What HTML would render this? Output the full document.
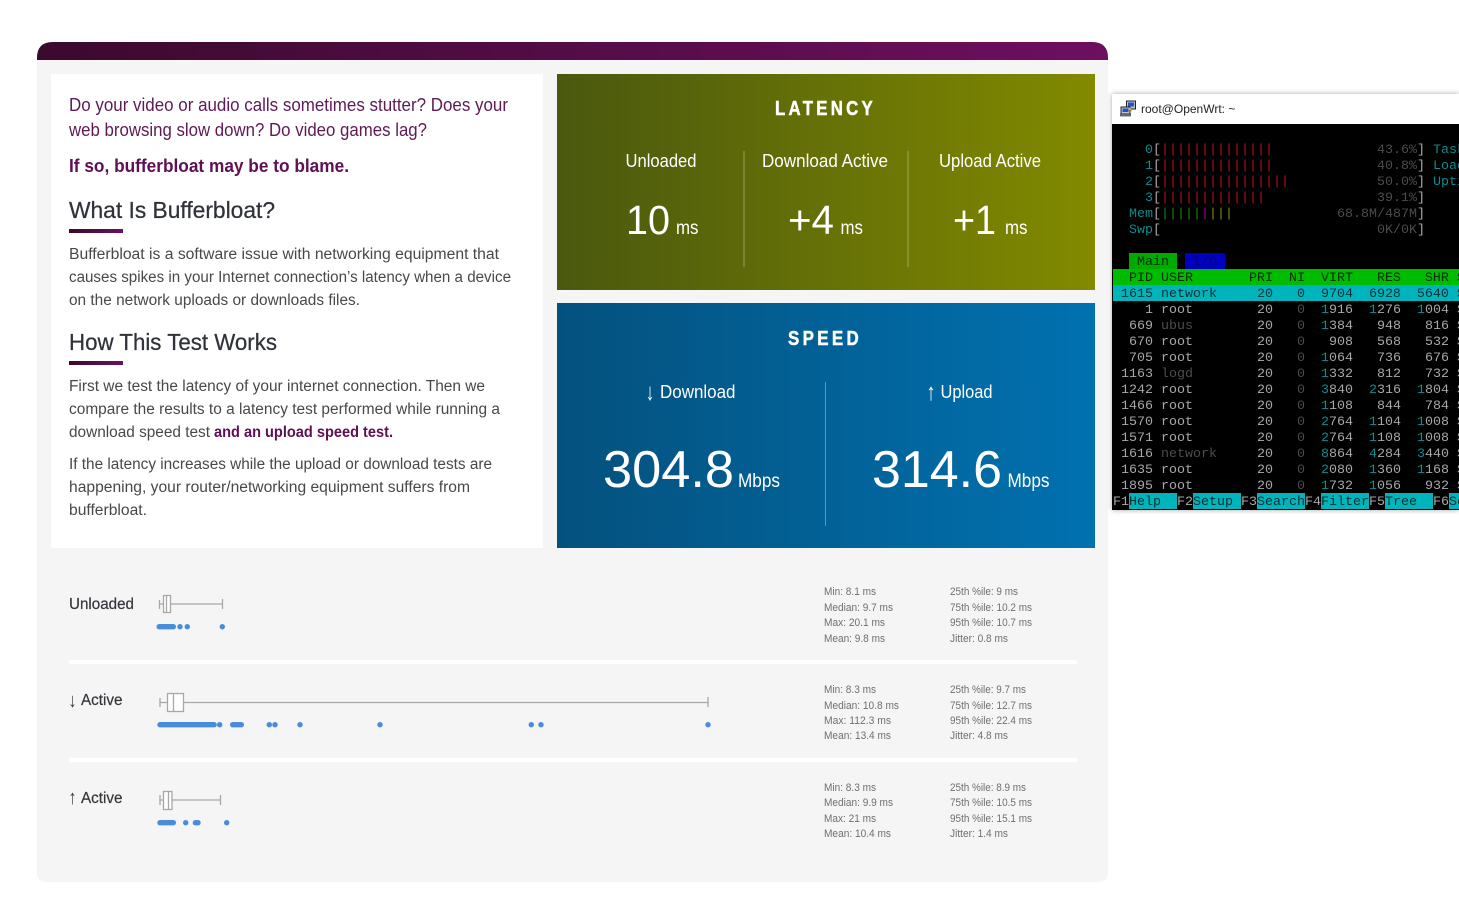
<!DOCTYPE html>
<html><head><meta charset="utf-8"><title>Bufferbloat Test</title>
<style>
html,body{margin:0;padding:0;background:#fff;width:1459px;height:899px;overflow:hidden}
svg.m{position:absolute;left:0;top:0}
svg text{font-family:"Liberation Sans",sans-serif}
.s{font-size:10.6px;fill:#6f6f6f}
.p{font-size:15.5px;fill:#484848}
.h{font-size:23px;fill:#2f3238;stroke:#2f3238;stroke-width:.25px}
.i{font-size:18px;fill:#5f1a55}
.b{font-weight:bold;fill:#5f0f54}
.w{fill:#fff}
.ti{letter-spacing:4px;font-weight:bold;font-size:20.5px;stroke:#fff;stroke-width:.5px}
.l{font-size:15.5px;fill:#33363b;stroke:#33363b;stroke-width:.2px}
.a{font-size:20px;fill:#33363b}
#win{position:absolute;left:1112px;top:94px;width:347px;height:416px;background:#000;box-shadow:0 0 5px rgba(0,0,0,.35);overflow:hidden}
#tb{position:absolute;left:0;top:0;width:347px;height:30px;background:#fff}
#tt{position:absolute;left:29px;top:7px;font:12px/16px "Liberation Sans",sans-serif;color:#222;white-space:nowrap}
#term{position:absolute;left:1px;top:47px;width:346px;font:13.334px/20px "Liberation Mono",monospace;color:#a8a8a8;filter:blur(.25px)}
#term div{height:16px;width:346px;overflow:hidden;white-space:pre}
.t{color:#0c8c8c}.d{color:#4c4c4c}.r{color:#b01515}.g{color:#0a8a0a}.v{color:#a000a0}.y{color:#8a8a00}
.hd{background:#00bb00;color:#062a06}
.hl{background:#00b4bb;color:#063034}
.f{background:#00b4bb;color:#063034;padding:3px 0}
.mt{background:#00aa00;color:#043004;padding:3px 0}
.io{background:#0000c0;color:#000078;padding:3px 0}
</style></head><body>
<svg class="m" width="1459" height="899" viewBox="0 0 1459 899">
<defs>
<linearGradient id="pu"><stop offset="0" stop-color="#3b0a2d"/><stop offset="1" stop-color="#6e0f60"/></linearGradient>
<linearGradient id="ol"><stop offset="0" stop-color="#4a580e"/><stop offset="1" stop-color="#828a00"/></linearGradient>
<linearGradient id="bl"><stop offset="0" stop-color="#04517e"/><stop offset="1" stop-color="#0171b0"/></linearGradient>
</defs>
<path d="M37 50H1108V872Q1108 882 1098 882H47Q37 882 37 872Z" fill="#f5f5f5"/>
<path d="M37 60V58Q37 42 53 42H1092Q1108 42 1108 58V60Z" fill="url(#pu)"/>
<rect x="51" y="74" width="492" height="474" fill="#fff"/>
<rect x="557" y="74" width="538" height="216" fill="url(#ol)"/>
<rect x="557" y="303" width="538" height="245" fill="url(#bl)"/>

<text class="i" x="69" y="111" textLength="439" lengthAdjust="spacingAndGlyphs">Do your video or audio calls sometimes stutter? Does your</text>
<text class="i" x="69" y="136" textLength="358" lengthAdjust="spacingAndGlyphs">web browsing slow down? Do video games lag?</text>
<text class="i b" x="69" y="172" textLength="280" lengthAdjust="spacingAndGlyphs">If so, bufferbloat may be to blame.</text>
<text class="h" x="69" y="218" textLength="206" lengthAdjust="spacingAndGlyphs">What Is Bufferbloat?</text>
<rect x="69" y="229" width="54" height="4" fill="url(#pu)"/>
<text class="p" x="69" y="259" textLength="430" lengthAdjust="spacingAndGlyphs">Bufferbloat is a software issue with networking equipment that</text>
<text class="p" x="69" y="282" textLength="442" lengthAdjust="spacingAndGlyphs">causes spikes in your Internet connection’s latency when a device</text>
<text class="p" x="69" y="305" textLength="291" lengthAdjust="spacingAndGlyphs">on the network uploads or downloads files.</text>
<text class="h" x="69" y="350" textLength="208" lengthAdjust="spacingAndGlyphs">How This Test Works</text>
<rect x="69" y="361" width="54" height="4" fill="url(#pu)"/>
<text class="p" x="69" y="391" textLength="416" lengthAdjust="spacingAndGlyphs">First we test the latency of your internet connection. Then we</text>
<text class="p" x="69" y="414" textLength="431" lengthAdjust="spacingAndGlyphs">compare the results to a latency test performed while running a</text>
<text class="p" x="69" y="437" textLength="141" lengthAdjust="spacingAndGlyphs">download speed test</text>
<text class="p b" x="214" y="437" textLength="179" lengthAdjust="spacingAndGlyphs">and an upload speed test.</text>
<text class="p" x="69" y="469" textLength="423" lengthAdjust="spacingAndGlyphs">If the latency increases while the upload or download tests are</text>
<text class="p" x="69" y="492" textLength="401" lengthAdjust="spacingAndGlyphs">happening, your router/networking equipment suffers from</text>
<text class="p" x="69" y="515" textLength="78" lengthAdjust="spacingAndGlyphs">bufferbloat.</text>

<text class="w ti" x="775" y="115" textLength="101" lengthAdjust="spacingAndGlyphs">LATENCY</text>
<text class="w" x="625.5" y="167" font-size="18" textLength="71" lengthAdjust="spacingAndGlyphs">Unloaded</text>
<text class="w" x="762" y="167" font-size="18" textLength="126" lengthAdjust="spacingAndGlyphs">Download Active</text>
<text class="w" x="939" y="167" font-size="18" textLength="102" lengthAdjust="spacingAndGlyphs">Upload Active</text>
<rect x="743.5" y="151" width="1" height="116" fill="#fff" opacity=".35"/>
<rect x="907.5" y="151" width="1" height="116" fill="#fff" opacity=".35"/>
<text class="w" x="626" y="234" font-size="41" textLength="44" lengthAdjust="spacingAndGlyphs">10</text>
<text class="w" x="676" y="234" font-size="19" textLength="22.5" lengthAdjust="spacingAndGlyphs">ms</text>
<text class="w" x="788" y="234" font-size="41" textLength="46" lengthAdjust="spacingAndGlyphs">+4</text>
<text class="w" x="840.5" y="234" font-size="19" textLength="22.5" lengthAdjust="spacingAndGlyphs">ms</text>
<text class="w" x="953" y="234" font-size="41" textLength="43" lengthAdjust="spacingAndGlyphs">+1</text>
<text class="w" x="1005" y="234" font-size="19" textLength="22.5" lengthAdjust="spacingAndGlyphs">ms</text>

<text class="w ti" x="788" y="345" textLength="74" lengthAdjust="spacingAndGlyphs">SPEED</text>
<text class="w" x="645.5" y="400" font-size="24" textLength="9" lengthAdjust="spacingAndGlyphs">↓</text>
<text class="w" x="660" y="398" font-size="18" textLength="75.5" lengthAdjust="spacingAndGlyphs">Download</text>
<text class="w" x="926.5" y="400" font-size="24" textLength="9" lengthAdjust="spacingAndGlyphs">↑</text>
<text class="w" x="940.5" y="398" font-size="18" textLength="52" lengthAdjust="spacingAndGlyphs">Upload</text>
<rect x="825" y="382" width="1" height="144" fill="#fff" opacity=".35"/>
<text class="w" x="603" y="487" font-size="52" textLength="131" lengthAdjust="spacingAndGlyphs">304.8</text>
<text class="w" x="738" y="487" font-size="19" textLength="42" lengthAdjust="spacingAndGlyphs">Mbps</text>
<text class="w" x="872" y="487" font-size="52" textLength="130" lengthAdjust="spacingAndGlyphs">314.6</text>
<text class="w" x="1007.5" y="487" font-size="19" textLength="42" lengthAdjust="spacingAndGlyphs">Mbps</text>

<text class="l" x="69" y="609" textLength="65" lengthAdjust="spacingAndGlyphs">Unloaded</text>
<text class="a" x="68.5" y="707" textLength="8" lengthAdjust="spacingAndGlyphs">↓</text>
<text class="l" x="81" y="705" textLength="41.5" lengthAdjust="spacingAndGlyphs">Active</text>
<text class="a" x="68.5" y="804" textLength="8" lengthAdjust="spacingAndGlyphs">↑</text>
<text class="l" x="81" y="803" textLength="41.5" lengthAdjust="spacingAndGlyphs">Active</text>

<rect x="69" y="660" width="1008" height="4" fill="#fff"/>
<rect x="69" y="758" width="1008" height="4" fill="#fff"/>

<g fill="none" stroke="#a8a8a8" stroke-width="1.3">
<path d="M159.5 600V609M159.5 604H163M170.5 604H222.5M222.5 599V609"/>
<rect x="163.5" y="595.5" width="7" height="17" fill="#fff"/><path d="M166.5 595.5V612.5"/>
<path d="M160 698V707M160 702.5H167M184 702.5H708M708 697V707"/>
<rect x="167.5" y="693.5" width="16" height="18" fill="#fff"/><path d="M173.5 693.5V711.5"/>
<path d="M160 795V805M160 800H163M172 800H220.5M220.5 795V805"/>
<rect x="163.5" y="791.5" width="8.5" height="18" fill="#fff"/><path d="M168.5 791.5V809.5"/>
</g>
<g fill="#4a8cdc">
<rect x="156.5" y="624" width="19.5" height="5.4" rx="2.7"/><circle cx="180" cy="626.7" r="2.7"/><circle cx="187.3" cy="626.7" r="2.7"/><circle cx="222.3" cy="626.7" r="2.7"/>
<rect x="157.3" y="722" width="59.5" height="5.4" rx="2.7"/><circle cx="219.7" cy="724.7" r="2.7"/><rect x="230" y="722" width="14" height="5.4" rx="2.7"/><circle cx="269.3" cy="724.7" r="2.7"/><circle cx="275" cy="724.7" r="2.7"/><circle cx="300" cy="724.7" r="2.7"/><circle cx="380" cy="724.7" r="2.7"/><circle cx="531.3" cy="724.7" r="2.7"/><circle cx="541" cy="724.7" r="2.7"/><circle cx="708" cy="724.7" r="2.7"/>
<rect x="157.3" y="820" width="18.7" height="5.4" rx="2.7"/><circle cx="185.7" cy="822.7" r="2.7"/><rect x="192.7" y="820" width="8" height="5.4" rx="2.7"/><circle cx="226.7" cy="822.7" r="2.7"/>
</g>

<g>
<text class="s" x="824" y="595" textLength="52" lengthAdjust="spacingAndGlyphs">Min: 8.1 ms</text>
<text class="s" x="824" y="611" textLength="69" lengthAdjust="spacingAndGlyphs">Median: 9.7 ms</text>
<text class="s" x="824" y="626" textLength="61" lengthAdjust="spacingAndGlyphs">Max: 20.1 ms</text>
<text class="s" x="824" y="642" textLength="61" lengthAdjust="spacingAndGlyphs">Mean: 9.8 ms</text>
<text class="s" x="950" y="595" textLength="68" lengthAdjust="spacingAndGlyphs">25th %ile: 9 ms</text>
<text class="s" x="950" y="611" textLength="82" lengthAdjust="spacingAndGlyphs">75th %ile: 10.2 ms</text>
<text class="s" x="950" y="626" textLength="82" lengthAdjust="spacingAndGlyphs">95th %ile: 10.7 ms</text>
<text class="s" x="950" y="642" textLength="58" lengthAdjust="spacingAndGlyphs">Jitter: 0.8 ms</text>

<text class="s" x="824" y="693" textLength="52" lengthAdjust="spacingAndGlyphs">Min: 8.3 ms</text>
<text class="s" x="824" y="709" textLength="75" lengthAdjust="spacingAndGlyphs">Median: 10.8 ms</text>
<text class="s" x="824" y="724" textLength="67" lengthAdjust="spacingAndGlyphs">Max: 112.3 ms</text>
<text class="s" x="824" y="739" textLength="67" lengthAdjust="spacingAndGlyphs">Mean: 13.4 ms</text>
<text class="s" x="950" y="693" textLength="76" lengthAdjust="spacingAndGlyphs">25th %ile: 9.7 ms</text>
<text class="s" x="950" y="709" textLength="82" lengthAdjust="spacingAndGlyphs">75th %ile: 12.7 ms</text>
<text class="s" x="950" y="724" textLength="82" lengthAdjust="spacingAndGlyphs">95th %ile: 22.4 ms</text>
<text class="s" x="950" y="739" textLength="58" lengthAdjust="spacingAndGlyphs">Jitter: 4.8 ms</text>

<text class="s" x="824" y="791" textLength="52" lengthAdjust="spacingAndGlyphs">Min: 8.3 ms</text>
<text class="s" x="824" y="806" textLength="69" lengthAdjust="spacingAndGlyphs">Median: 9.9 ms</text>
<text class="s" x="824" y="822" textLength="52" lengthAdjust="spacingAndGlyphs">Max: 21 ms</text>
<text class="s" x="824" y="837" textLength="67" lengthAdjust="spacingAndGlyphs">Mean: 10.4 ms</text>
<text class="s" x="950" y="791" textLength="76" lengthAdjust="spacingAndGlyphs">25th %ile: 8.9 ms</text>
<text class="s" x="950" y="806" textLength="82" lengthAdjust="spacingAndGlyphs">75th %ile: 10.5 ms</text>
<text class="s" x="950" y="822" textLength="82" lengthAdjust="spacingAndGlyphs">95th %ile: 15.1 ms</text>
<text class="s" x="950" y="837" textLength="58" lengthAdjust="spacingAndGlyphs">Jitter: 1.4 ms</text>
</g>
</svg>

<div id="win">
<div id="tb">
<svg style="position:absolute;left:8px;top:6px" width="17" height="17" viewBox="0 0 17 17">
<rect x="6.5" y="1" width="9" height="8" fill="#b8c4d8" stroke="#222"/><rect x="8" y="2.5" width="6" height="4" fill="#2a4fc0"/>
<rect x="1" y="7" width="9" height="7" fill="#b8c4d8" stroke="#222"/><rect x="2.5" y="8.5" width="6" height="3.5" fill="#2a4fc0"/>
<rect x="0.5" y="14" width="10" height="2" fill="#888" stroke="#222" stroke-width=".6"/>
<path d="M9 8L12 11" stroke="#e0c020" stroke-width="1.5"/>
</svg>
<div id="tt">root@OpenWrt: ~</div>
</div>
<div id="term"><div>    <span class="t">0</span>[<span class="r">||||||||||||||</span>             <span class="d">43.6%</span>] <span class="t">Tasks: 27</span></div>
<div>    <span class="t">1</span>[<span class="r">||||||||||||||</span>             <span class="d">40.8%</span>] <span class="t">Load average</span></div>
<div>    <span class="t">2</span>[<span class="r">||||||||||||||||</span>           <span class="d">50.0%</span>] <span class="t">Uptime</span></div>
<div>    <span class="t">3</span>[<span class="r">|||||||||||||</span>              <span class="d">39.1%</span>]</div>
<div>  <span class="t">Mem</span>[<span class="g">|||||</span><span class="v">|</span><span class="y">|||</span>             <span class="d">68.8M/487M</span>]</div>
<div>  <span class="t">Swp</span>[                           <span class="d">0K/0K</span>]</div>
<div> </div>
<div>  <span class="mt"> Main </span> <span class="io"> I/O </span></div>
<div class="hd">  PID USER       PRI  NI  VIRT   RES   SHR S</div>
<div class="hl"> 1615 network     20   0  9704  6928  5640 S</div>
<div>    1 root        20   <span class="d">0</span>  <span class="t">1</span>916  <span class="t">1</span>276  <span class="t">1</span>004 S</div>
<div>  669 <span class="d">ubus</span>        20   <span class="d">0</span>  <span class="t">1</span>384   948   816 S</div>
<div>  670 root        20   <span class="d">0</span>   908   568   532 S</div>
<div>  705 root        20   <span class="d">0</span>  <span class="t">1</span>064   736   676 S</div>
<div> 1163 <span class="d">logd</span>        20   <span class="d">0</span>  <span class="t">1</span>332   812   732 S</div>
<div> 1242 root        20   <span class="d">0</span>  <span class="t">3</span>840  <span class="t">2</span>316  <span class="t">1</span>804 S</div>
<div> 1466 root        20   <span class="d">0</span>  <span class="t">1</span>108   844   784 S</div>
<div> 1570 root        20   <span class="d">0</span>  <span class="t">2</span>764  <span class="t">1</span>104  <span class="t">1</span>008 S</div>
<div> 1571 root        20   <span class="d">0</span>  <span class="t">2</span>764  <span class="t">1</span>108  <span class="t">1</span>008 S</div>
<div> 1616 <span class="d">network</span>     20   <span class="d">0</span>  <span class="t">8</span>864  <span class="t">4</span>284  <span class="t">3</span>440 S</div>
<div> 1635 root        20   <span class="d">0</span>  <span class="t">2</span>080  <span class="t">1</span>360  <span class="t">1</span>168 S</div>
<div> 1895 root        20   <span class="d">0</span>  <span class="t">1</span>732  <span class="t">1</span>056   932 S</div>
<div>F1<span class="f">Help  </span>F2<span class="f">Setup </span>F3<span class="f">Search</span>F4<span class="f">Filter</span>F5<span class="f">Tree  </span>F6<span class="f">SortBy</span></div></div>
</div>
</body></html>
